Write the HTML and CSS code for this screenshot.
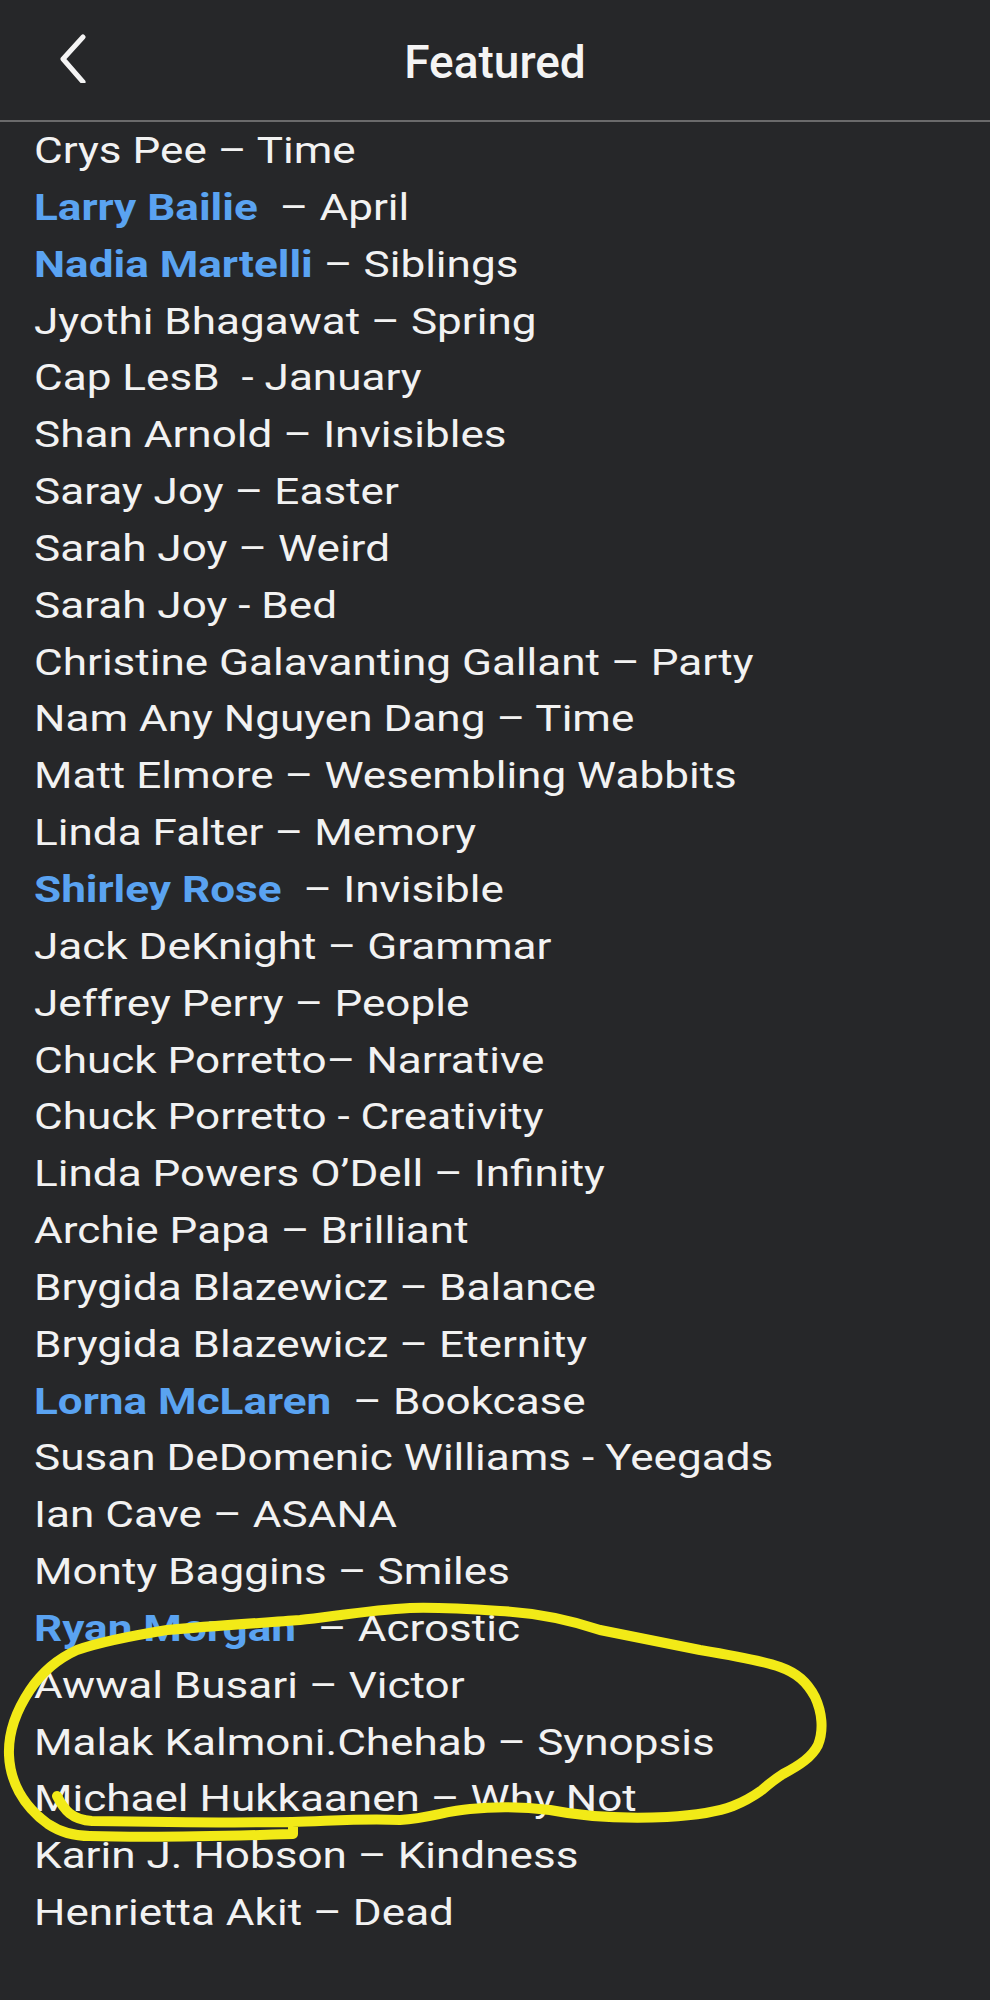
FILE: index.html
```html
<!DOCTYPE html>
<html lang="en">
<head>
<meta charset="utf-8">
<title>Featured</title>
<link rel="stylesheet" href="styles.css">
</head>
<body>
<div class="screen">
  <header class="topbar">
    <svg class="back" width="40" height="60" viewBox="0 0 40 60" aria-hidden="true">
      <path d="M33 14 L13 36 L33 59" fill="none" stroke="#f4f4f4" stroke-width="5" stroke-linecap="round" stroke-linejoin="round"/>
    </svg>
    <h1 class="title">Featured</h1>
  </header>
  <main class="list">
    <p class="row">Crys Pee – Time</p>
    <p class="row"><b class="name">Larry Bailie</b>&nbsp; – April</p>
    <p class="row"><b class="name">Nadia Martelli</b> – Siblings</p>
    <p class="row">Jyothi Bhagawat – Spring</p>
    <p class="row">Cap LesB &nbsp;- January</p>
    <p class="row">Shan Arnold – Invisibles</p>
    <p class="row">Saray Joy – Easter</p>
    <p class="row">Sarah Joy – Weird</p>
    <p class="row">Sarah Joy - Bed</p>
    <p class="row">Christine Galavanting Gallant – Party</p>
    <p class="row">Nam Any Nguyen Dang – Time</p>
    <p class="row">Matt Elmore – Wesembling Wabbits</p>
    <p class="row">Linda Falter – Memory</p>
    <p class="row"><b class="name">Shirley Rose</b>&nbsp; – Invisible</p>
    <p class="row">Jack DeKnight – Grammar</p>
    <p class="row">Jeffrey Perry – People</p>
    <p class="row">Chuck Porretto– Narrative</p>
    <p class="row">Chuck Porretto - Creativity</p>
    <p class="row">Linda Powers O’Dell – Infinity</p>
    <p class="row">Archie Papa – Brilliant</p>
    <p class="row">Brygida Blazewicz – Balance</p>
    <p class="row">Brygida Blazewicz – Eternity</p>
    <p class="row"><b class="name">Lorna McLaren</b>&nbsp; – Bookcase</p>
    <p class="row">Susan DeDomenic Williams - Yeegads</p>
    <p class="row">Ian Cave – ASANA</p>
    <p class="row">Monty Baggins – Smiles</p>
    <p class="row"><b class="name">Ryan Morgan</b>&nbsp; – Acrostic</p>
    <p class="row">Awwal Busari – Victor</p>
    <p class="row">Malak Kalmoni.Chehab – Synopsis</p>
    <p class="row">Michael Hukkaanen – Why Not</p>
    <p class="row">Karin J. Hobson – Kindness</p>
    <p class="row">Henrietta Akit – Dead</p>
  </main>
  <svg class="scribble" width="990" height="2000" viewBox="0 0 990 2000" aria-hidden="true">
    <path d="M57 1796 C64 1810 72 1820 92 1821 C150 1822 230 1823 292 1822 C330 1821 365 1818 400 1820 C430 1818 445 1811 470 1809 C500 1806 525 1807 550 1810 C580 1816 620 1819 667 1817 C700 1815 720 1811 733 1806 C748 1800 755 1795 762 1790 C770 1783 775 1779 783 1774 C800 1765 812 1757 818 1745 C824 1730 822 1712 815 1697 C807 1682 797 1673 780 1667 C760 1660 730 1655 700 1650 C660 1642 630 1636 600 1630 C570 1620 540 1613 500 1611 C470 1609 440 1607 410 1608 C370 1610 330 1617 300 1620 C260 1623 210 1626 167 1630 C130 1636 100 1642 77 1650 C55 1660 40 1675 30 1690 C18 1708 8 1730 9 1755 C10 1780 22 1805 48 1824 C60 1832 75 1836 90 1836 C150 1838 230 1836 293 1834 L293 1823" fill="none" stroke="#f2ea17" stroke-width="10" stroke-linecap="round" stroke-linejoin="round"/>
  </svg>
</div>
</body>
</html>
```

FILE: styles.css
```css
html, body {
  margin: 0;
  padding: 0;
  background: #262729;
}

body {
  font-family: Roboto, "Noto Sans", "Liberation Sans", sans-serif;
  color: #f1f1f1;
}

.screen {
  position: relative;
  width: 990px;
  min-height: 2000px;
  background: #262729;
  overflow: hidden;
}

.topbar {
  position: relative;
  height: 120px;
  border-bottom: 2px solid #6a6a6b;
  display: flex;
  align-items: center;
  justify-content: center;
}

.back {
  position: absolute;
  left: 50px;
  top: 23px;
}

.title {
  margin: 0;
  font-size: 46px;
  font-weight: 500;
  color: #f4f4f4;
  line-height: 1;
  padding-top: 4px;
}

.list {
  padding: 0 0 0 34px;
  transform: scaleX(1.175);
  transform-origin: 34px 0;
}

.row {
  margin: 0;
  font-size: 37.5px;
  line-height: 56.84px;
  white-space: nowrap;
  color: #f2f2f2;
}

.name {
  font-weight: 700;
  color: #5aa3f1;
}

.scribble {
  position: absolute;
  left: 0;
  top: 0;
  pointer-events: none;
}
```
